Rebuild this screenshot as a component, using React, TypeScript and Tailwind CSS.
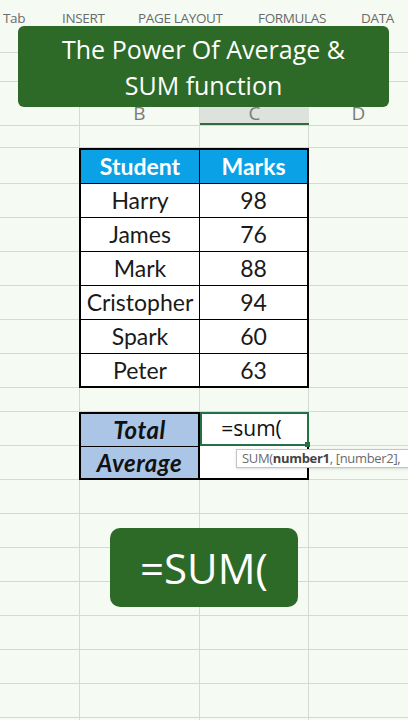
import React from 'react';

const line = 'border-[#d5d9d3]';

// one plain spreadsheet row: columns A, B, C, D
const GridRow: React.FC<{ h: string }> = ({ h }) => (
    <div className={`flex ${h}`}>
        <div className={`w-[80px] border-r border-b ${line}`} />
        <div className={`w-[120px] border-r border-b ${line}`} />
        <div className={`w-[109px] border-r border-b ${line}`} />
        <div className={`flex-1 border-b ${line}`} />
    </div>
);

const students = [
    { name: 'Harry', marks: 98 },
    { name: 'James', marks: 76 },
    { name: 'Mark', marks: 88 },
    { name: 'Cristopher', marks: 94 },
    { name: 'Spark', marks: 60 },
    { name: 'Peter', marks: 63 },
];

export default function App() {
    return (
        <div className="relative w-[408px] h-[720px] overflow-hidden bg-[#f5fbf2] font-['Lato',sans-serif]">
            {/* Ribbon tabs */}
            <div className={`flex h-[53px] border-b ${line} text-[13.5px] text-[#6a6a6a] font-['Open_Sans',sans-serif] pt-[8px] tracking-tight`}>
                <span className="w-[62px] pl-[3px]">Tab</span>
                <span className="w-[76px]">INSERT</span>
                <span className="w-[120px]">PAGE LAYOUT</span>
                <span className="w-[103px]">FORMULAS</span>
                <span>DATA</span>
            </div>
            <div className={`h-[29px] border-b ${line}`} />
            <div className="h-[18px]" />

            {/* Column headers */}
            <div className={`flex h-[26px] border-b ${line} text-[19px] text-[#7a7a7a] font-['Open_Sans',sans-serif] leading-none`}>
                <div className={`w-[80px] border-r ${line}`} />
                <div className={`w-[120px] border-r ${line} flex items-center justify-center pt-[1px]`}>B</div>
                <div className="w-[109px] bg-[#dde2dc] border-b-2 border-[#2f6b3c] flex items-center justify-center pt-[3px]">C</div>
                <div className="flex-1 flex items-center justify-center pt-[1px]">D</div>
            </div>
            <GridRow h="h-[22px]" />

            {/* Students table */}
            <div className="flex">
                <div className="w-[79px]">
                    <div className={`h-[36px] border-b ${line}`} />
                    {students.map((s) => (
                        <div key={s.name} className={`h-[34px] border-b ${line}`} />
                    ))}
                </div>
                <div className="w-[230px] border-2 border-black">
                    <div className="flex h-[34px] bg-[#0aa1e6] border-b border-black text-white font-bold text-[23px]">
                        <div className="w-[119px] border-r border-black flex items-center justify-center">Student</div>
                        <div className="flex-1 flex items-center justify-center">Marks</div>
                    </div>
                    {students.map((s, i) => (
                        <div
                            key={s.name}
                            className={`flex ${i === students.length - 1 ? 'h-[32px]' : 'h-[34px] border-b border-black'} bg-white text-[23px] text-[#1a1a1a]`}
                        >
                            <div className="w-[119px] border-r border-black flex items-center justify-center">{s.name}</div>
                            <div className="flex-1 flex items-center justify-center">{s.marks}</div>
                        </div>
                    ))}
                </div>
                <div className="flex-1">
                    <div className={`h-[36px] border-b ${line}`} />
                    {students.map((s) => (
                        <div key={s.name} className={`h-[34px] border-b ${line}`} />
                    ))}
                </div>
            </div>
            <GridRow h="h-[24px]" />

            {/* Total / Average */}
            <div className="relative flex">
                <div className="w-[79px]">
                    <div className={`h-[34px] border-b ${line}`} />
                    <div className={`h-[34px] border-b ${line}`} />
                </div>
                <div className="w-[121px] border-2 border-black bg-[#aac5e5] text-[24px] font-bold italic text-[#111] tracking-[0.5px]">
                    <div className="h-[33px] border-b border-black flex items-center justify-center">Total</div>
                    <div className="h-[31px] flex items-center justify-center">Average</div>
                </div>
                <div className="w-[109px]">
                    <div className="relative h-[34px] border-2 border-[#217346] bg-white flex items-center justify-center text-[21px] text-[#111] font-['Open_Sans',sans-serif]">
                        <span className="-ml-[6px]">=sum(</span>
                        <span className="absolute -right-[3px] -bottom-[3px] w-[5px] h-[5px] bg-[#217346]" />
                    </div>
                    <div className="h-[34px] border-r-2 border-b-2 border-black bg-white" />
                </div>
                <div className="flex-1">
                    <div className={`h-[34px] border-b ${line}`} />
                    <div className={`h-[34px] border-b ${line}`} />
                </div>

                {/* Function tooltip */}
                <div className="absolute left-[236px] top-[37px] h-[19px] pl-[5px] pr-[10px] bg-white border border-[#c4c4c4] shadow-sm flex items-center whitespace-nowrap text-[13px] text-[#6b6b6b] font-['Open_Sans',sans-serif] tracking-tight">
                    SUM(<b className="text-[#444]">number1</b>, [number2],
                </div>
            </div>

            {[...Array(8)].map((_, i) => (
                <GridRow key={i} h="h-[34px]" />
            ))}

            {/* Title banner */}
            <div className="absolute left-[18px] top-[26px] w-[371px] h-[81px] rounded-[6px] bg-[#2e6a27] flex flex-col items-center justify-center text-white text-[25px] leading-[36px] font-['Open_Sans',sans-serif]">
                <span>The Power Of Average &amp;</span>
                <span>SUM function</span>
            </div>

            {/* Formula banner */}
            <div className="absolute left-[110px] top-[528px] w-[188px] h-[79px] rounded-[10px] bg-[#2e6a27] flex items-center justify-center text-white text-[42px] font-['Open_Sans',sans-serif]">
                =SUM(
            </div>
        </div>
    );
}
